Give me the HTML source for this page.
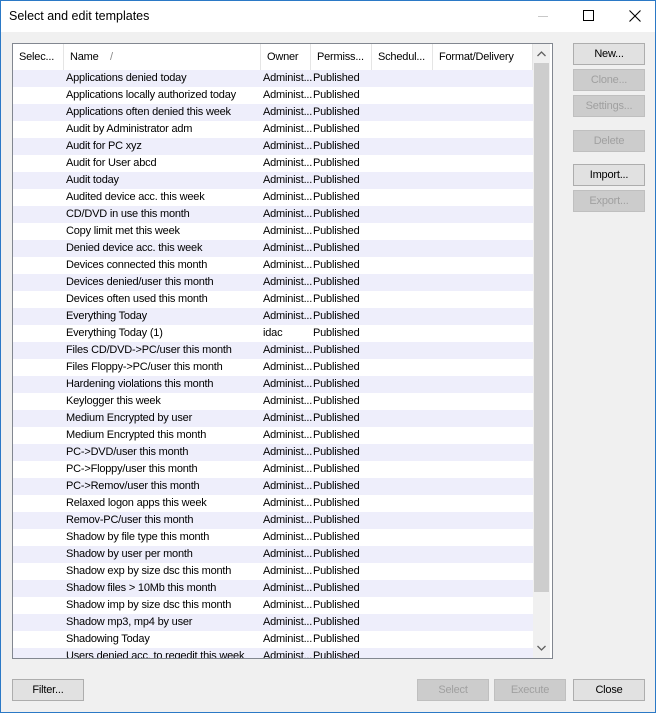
<!DOCTYPE html>
<html><head><style>
*{margin:0;padding:0;box-sizing:border-box}
body{width:659px;height:715px;background:#fff;font-family:"Liberation Sans",sans-serif;font-size:11px;letter-spacing:-0.2px;color:#000;position:relative;overflow:hidden}
.win{position:absolute;left:0;top:0;width:656px;height:713px;background:#f0f0f0;border:1px solid #2b79c6;border-top:1px solid #2b79c6}
.title{position:absolute;left:0;top:0;width:100%;height:31px;background:#fff}
.title span{position:absolute;left:8px;top:8px;font-size:12.5px;letter-spacing:0}
.lb{position:absolute;left:11px;top:42px;width:541px;height:616px;background:#fff;border:1px solid #828790;overflow:hidden}
.hdr{position:absolute;left:0;top:0;height:26px;width:520px;background:#fff}
.hdr div{position:absolute;top:0;height:26px;line-height:26px;padding-left:6px;border-right:1px solid #e5e5e5;white-space:nowrap}
.row{position:absolute;left:0;width:520px;height:17px;line-height:17px;white-space:nowrap}
.row.a{background:#eeeefb}
.row span{position:absolute;top:0}
.sb{position:absolute;left:520px;top:0;width:17px;height:614px;background:#f0f0f0}
.th{position:absolute;left:1px;top:19px;width:15px;height:529px;background:#cdcdcd}
.btn{position:absolute;width:72px;height:22px;border:1px solid #adadad;background:#e1e1e1;text-align:center;line-height:20px;font-size:11px}
.dis{color:#a0a0a0;background:#cccccc;border-color:#bfbfbf}
</style></head><body>
<div class="win">
<div class="title"><span>Select and edit templates</span>
<div style="position:absolute;left:537px;top:15px;width:10px;height:1px;background:#c8c8c8"></div>
<div style="position:absolute;left:582px;top:9px;width:11px;height:11px;border:1px solid #000"></div>
<svg style="position:absolute;left:628px;top:9px" width="12" height="12"><path d="M0.5 0.5L11.5 11.5M11.5 0.5L0.5 11.5" stroke="#000" stroke-width="1.1"/></svg>
</div>
<div class="lb">
<div class="hdr">
<div style="left:0;width:51px">Selec...</div>
<div style="left:51px;width:197px">Name &nbsp;&nbsp;&nbsp;<span style="color:#888">/</span></div>
<div style="left:248px;width:50px">Owner</div>
<div style="left:298px;width:61px">Permiss...</div>
<div style="left:359px;width:61px">Schedul...</div>
<div style="left:420px;width:100px">Format/Delivery</div>
</div>
<div id="rows"></div>
<div class="sb"><svg style="position:absolute;left:4px;top:7px" width="9" height="6"><path d="M0.5 5L4.5 1L8.5 5" stroke="#606060" fill="none" stroke-width="1.3"/></svg>
<div class="th"></div>
<svg style="position:absolute;left:4px;top:601px" width="9" height="6"><path d="M0.5 1L4.5 5L8.5 1" stroke="#606060" fill="none" stroke-width="1.3"/></svg></div>
</div>
<div class="btn" style="left:572px;top:42px">New...</div>
<div class="btn dis" style="left:572px;top:68px">Clone...</div>
<div class="btn dis" style="left:572px;top:94px">Settings...</div>
<div class="btn dis" style="left:572px;top:129px">Delete</div>
<div class="btn" style="left:572px;top:163px">Import...</div>
<div class="btn dis" style="left:572px;top:189px">Export...</div>
<div class="btn" style="left:11px;top:678px">Filter...</div>
<div class="btn dis" style="left:416px;top:678px">Select</div>
<div class="btn dis" style="left:493px;top:678px">Execute</div>
<div class="btn" style="left:572px;top:678px">Close</div>
</div>
<script>
var n=["Applications denied today","Applications locally authorized today","Applications often denied this week","Audit by Administrator adm","Audit for PC xyz","Audit for User abcd","Audit today","Audited device acc. this week","CD/DVD in use this month","Copy limit met this week","Denied device acc. this week","Devices connected this month","Devices denied/user this month","Devices often used this month","Everything Today","Everything Today (1)","Files CD/DVD->PC/user this month","Files Floppy->PC/user this month","Hardening violations this month","Keylogger this week","Medium Encrypted by user","Medium Encrypted this month","PC->DVD/user this month","PC->Floppy/user this month","PC->Remov/user this month","Relaxed logon apps this week","Remov-PC/user this month","Shadow by file type this month","Shadow by user per month","Shadow exp by size dsc this month","Shadow files > 10Mb this month","Shadow imp by size dsc this month","Shadow mp3, mp4 by user","Shadowing Today","Users denied acc. to regedit this week"];
var h="";n.forEach(function(s,i){h+='<div class="row'+(i%2==0?' a':'')+'" style="top:'+(26+17*i)+'px"><span style="left:53px">'+s.replace(/>/g,'&gt;')+'</span><span style="left:250px">'+(i==15?'idac':'Administ...')+'</span><span style="left:300px">Published</span></div>'});
document.getElementById('rows').innerHTML=h;
</script>
</body></html>
